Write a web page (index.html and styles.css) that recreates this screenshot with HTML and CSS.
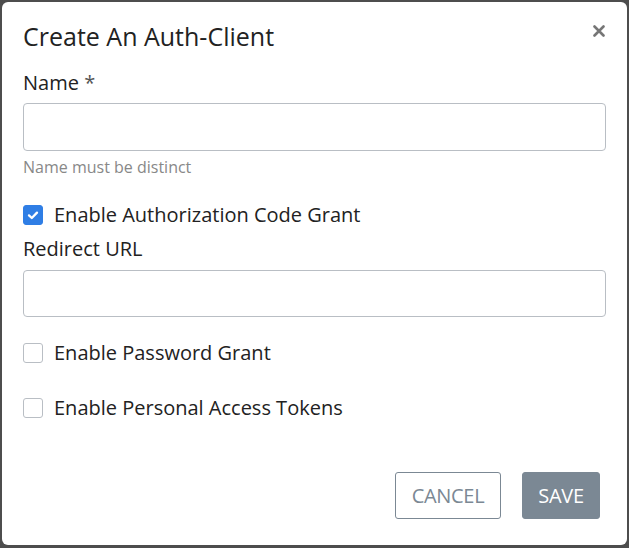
FILE: index.html
```html
<!DOCTYPE html>
<html>
<head>
<meta charset="utf-8">
<link rel="stylesheet" href="styles.css">
</head>
<body>
<div class="modal">
  <div class="header">
    <h1 class="title">Create An Auth-Client</h1>
    <span class="close"><svg viewBox="0 0 12 12" width="12" height="12"><path d="M1.5 1.5 L10.5 10.5 M10.5 1.5 L1.5 10.5" stroke="#767676" stroke-width="2.6" stroke-linecap="round"/></svg></span>
  </div>
  <div class="body">
    <label class="label name">Name <span class="req">*</span></label>
    <div class="input"></div>
    <div class="help">Name must be distinct</div>
    <div class="check-row first">
      <span class="box checked"><svg viewBox="0 0 20 20" width="20" height="20"><path d="M6 10.4 L8.8 13 L14 7.6" fill="none" stroke="#fff" stroke-width="2.3" stroke-linecap="round" stroke-linejoin="round"/></svg></span>
      <span class="check-label">Enable Authorization Code Grant</span>
    </div>
    <label class="label redirect">Redirect URL</label>
    <div class="input second"></div>
    <div class="check-row pw">
      <span class="box"></span>
      <span class="check-label">Enable Password Grant</span>
    </div>
    <div class="check-row pat">
      <span class="box"></span>
      <span class="check-label">Enable Personal Access Tokens</span>
    </div>
  </div>
  <div class="footer">
    <button class="btn cancel">CANCEL</button>
    <button class="btn save">SAVE</button>
  </div>
</div>
</body>
</html>
```
FILE: styles.css
```css
html, body {
  margin: 0;
  padding: 0;
}
body {
  width: 629px;
  height: 548px;
  background: #4d4d4d;
  font-family: "Open Sans", "Noto Sans", sans-serif;
  color: #222;
  box-sizing: border-box;
  padding: 2px 2px 3px 2px;
}
.modal {
  background: #fff;
  border-radius: 6px;
  height: 543px;
  box-sizing: border-box;
  padding: 0 21px 0 21px;
  display: flex;
  flex-direction: column;
}
.header {
  display: flex;
  justify-content: space-between;
  align-items: flex-start;
  padding-top: 18px;
}
.title {
  margin: 0;
  font-size: 25px;
  font-weight: 400;
  line-height: 32px;
  color: #222;
}
.close {
  display: flex;
  margin-top: 5px;
  margin-right: 1px;
}
.body {
  display: flex;
  flex-direction: column;
}
.label {
  font-size: 20px;
  line-height: 24px;
  color: #222;
}
.label.name {
  margin-top: 19px;
}
.req {
  color: #555;
}
.input {
  margin-top: 8px;
  height: 48px;
  border: 1px solid #b9bec4;
  border-radius: 4px;
  box-sizing: border-box;
}
.input.second {
  margin-top: 9px;
  height: 47px;
}
.help {
  font-size: 16px;
  line-height: 20px;
  color: #888;
  margin-top: 6px;
}
.check-row {
  display: flex;
  align-items: center;
  gap: 11px;
  height: 24px;
}
.check-row.first {
  margin-top: 26px;
}
.check-row.pw {
  margin-top: 24px;
}
.check-row.pat {
  margin-top: 31px;
}
.box {
  width: 20px;
  height: 20px;
  box-sizing: border-box;
  border: 1px solid #b9bec4;
  border-radius: 3px;
  display: flex;
  background: #fff;
}
.box.checked {
  background: #2f7ee5;
  border-color: #2f7ee5;
}
.box.checked svg {
  margin: -1px;
}
.check-label {
  font-size: 20px;
  line-height: 24px;
}
.label.redirect {
  margin-top: 10px;
}
.footer {
  margin-top: auto;
  display: flex;
  justify-content: flex-end;
  gap: 21px;
  padding-bottom: 26px;
  padding-right: 6px;
}
.btn {
  height: 47px;
  font-family: "Open Sans", "Noto Sans", sans-serif;
  font-size: 20px;
  border-radius: 3px;
  box-sizing: border-box;
  padding: 0;
  letter-spacing: -0.3px;
}
.cancel {
  background: #fff;
  border: 1px solid #7b8894;
  color: #7b8894;
  width: 106px;
}
.save {
  background: #7b8894;
  border: 1px solid #7b8894;
  color: #fff;
  width: 78px;
}
```
